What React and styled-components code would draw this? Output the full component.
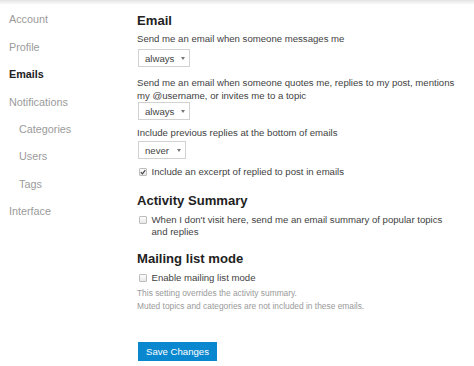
import React from "react";
import styled, { createGlobalStyle } from "styled-components";

const Global = createGlobalStyle`
  html, body { margin: 0; padding: 0; }
  body {
    background: linear-gradient(to bottom, #e2e2e2 0px, #efefef 2px, #ffffff 5px) no-repeat;
    background-color: #fff;
    font-family: "Liberation Sans", Arial, sans-serif;
    color: #333;
  }
`;

const Page = styled.div`
  display: grid;
  grid-template-columns: 137px 320px;
  min-height: 366px;
`;

const Sidebar = styled.nav`
  display: flex;
  flex-direction: column;
  padding-top: 6.3px;
`;

const NavItem = styled.div`
  height: 27.43px;
  line-height: 27.43px;
  font-size: 10.8px;
  padding-left: ${(p) => (p.$sub ? 19 : 9)}px;
  color: ${(p) => (p.$active ? "#222" : "#9b9b9b")};
  font-weight: ${(p) => (p.$active ? 700 : 400)};
  white-space: nowrap;
`;

const Content = styled.main`
  display: flex;
  flex-direction: column;
  align-items: flex-start;
  padding-top: 11px;
`;

const Heading = styled.h3`
  margin: ${(p) => p.$mt || 0}px 0 0;
  font-size: 13.1px;
  line-height: 20px;
  font-weight: 700;
  color: #222;
`;

const Label = styled.div`
  margin-top: ${(p) => p.$mt || 0}px;
  font-size: 9.6px;
  line-height: 13px;
  color: #3f3f3f;
`;

const Select = styled.div`
  margin-top: ${(p) => p.$mt || 0}px;
  box-sizing: border-box;
  width: ${(p) => p.$w}px;
  height: 18px;
  border: 1px solid #d2d2d2;
  background: #fff;
  display: flex;
  align-items: center;
  justify-content: space-between;
  padding: 0 4px 0 6px;
  margin-left: 1px;
  font-size: 9.6px;
  color: #444;
`;

const Caret = styled.span`
  width: 0;
  height: 0;
  border-left: 2.5px solid transparent;
  border-right: 2.5px solid transparent;
  border-top: 3px solid #777;
  margin-top: 1px;
`;

const CheckRow = styled.label`
  margin-top: ${(p) => p.$mt || 0}px;
  display: flex;
  align-items: flex-start;
  gap: 5px;
  font-size: 9.6px;
  line-height: 12px;
  color: #3f3f3f;
`;

const Box = styled.span`
  flex: none;
  box-sizing: border-box;
  width: 8px;
  height: 8px;
  margin: 2px 0 0 1.5px;
  border: 1px solid #bdbdbd;
  border-radius: 1px;
  background: linear-gradient(#fdfdfd, #e8e8e8);
  display: flex;
  align-items: center;
  justify-content: center;
`;

const CheckText = styled.span`
  max-width: 292px;
`;

const Help = styled.div`
  margin-top: ${(p) => p.$mt || 0}px;
  font-size: 8.4px;
  line-height: 13px;
  color: #9a9a9a;
`;

const SaveButton = styled.button`
  margin-top: ${(p) => p.$mt || 0}px;
  margin-left: 0.5px;
  height: 19px;
  padding: 0 8.5px;
  border: none;
  background: #0a88cf;
  color: #fff;
  font-family: "Liberation Sans", Arial, sans-serif;
  font-size: 9.6px;
  cursor: pointer;
`;

const Checkbox = ({ checked }) => (
  <Box>
    {checked && (
      <svg width="6" height="6" viewBox="0 0 6 6">
        <path d="M0.8 3.2 L2.4 4.8 L5.3 1.2" fill="none" stroke="#444" strokeWidth="1.2" />
      </svg>
    )}
  </Box>
);

const nav = [
  { label: "Account" },
  { label: "Profile" },
  { label: "Emails", active: true },
  { label: "Notifications" },
  { label: "Categories", sub: true },
  { label: "Users", sub: true },
  { label: "Tags", sub: true },
  { label: "Interface" },
];

export default function App() {
  return (
    <>
      <Global />
      <Page>
        <Sidebar>
          {nav.map((n) => (
            <NavItem key={n.label} $sub={n.sub} $active={n.active}>
              {n.label}
            </NavItem>
          ))}
        </Sidebar>
        <Content>
          <Heading>Email</Heading>
          <Label $mt={1}>Send me an email when someone messages me</Label>
          <Select $mt={4} $w={52}>
            always <Caret />
          </Select>
          <Label $mt={9}>
            Send me an email when someone quotes me, replies to my post, mentions my @username, or invites me to a topic
          </Label>
          <Select $mt={0} $w={52}>
            always <Caret />
          </Select>
          <Label $mt={5.5}>Include previous replies at the bottom of emails</Label>
          <Select $mt={2.5} $w={48}>
            never <Caret />
          </Select>
          <CheckRow $mt={6.5}>
            <Checkbox checked />
            <CheckText>Include an excerpt of replied to post in emails</CheckText>
          </CheckRow>

          <Heading $mt={13}>Activity Summary</Heading>
          <CheckRow $mt={3}>
            <Checkbox />
            <CheckText>
              When I don't visit here, send me an email summary of popular topics and replies
            </CheckText>
          </CheckRow>

          <Heading $mt={11}>Mailing list mode</Heading>
          <CheckRow $mt={3.5}>
            <Checkbox />
            <CheckText>Enable mailing list mode</CheckText>
          </CheckRow>
          <Help $mt={2.5}>
            This setting overrides the activity summary.
            <br />
            Muted topics and categories are not included in these emails.
          </Help>

          <SaveButton $mt={29.5}>Save Changes</SaveButton>
        </Content>
      </Page>
    </>
  );
}
